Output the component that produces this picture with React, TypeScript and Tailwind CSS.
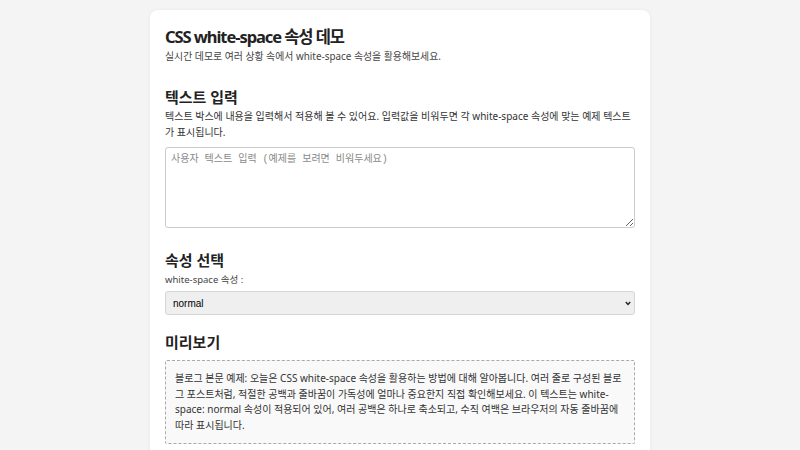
import { useState } from 'react';

const modes = ['normal', 'nowrap', 'pre', 'pre-wrap', 'pre-line', 'break-spaces'] as const;
type Mode = (typeof modes)[number];

const sample =
  '블로그 본문 예제: 오늘은 CSS white-space 속성을 활용하는 방법에 대해 알아봅니다. 여러 줄로 구성된 블로그 포스트처럼, 적절한 공백과 줄바꿈이 가독성에 얼마나 중요한지 직접 확인해보세요. 이 텍스트는 white-space: normal 속성이 적용되어 있어, 여러 공백은 하나로 축소되고, 수직 여백은 브라우저의 자동 줄바꿈에 따라 표시됩니다.';

const wsClass: Record<Mode, string> = {
  normal: 'whitespace-normal',
  nowrap: 'whitespace-nowrap',
  pre: 'whitespace-pre',
  'pre-wrap': 'whitespace-pre-wrap',
  'pre-line': 'whitespace-pre-line',
  'break-spaces': 'whitespace-break-spaces',
};

export default function App() {
  const [text, setText] = useState('');
  const [mode, setMode] = useState<Mode>('normal');

  return (
    <div className="min-h-screen bg-[#f4f4f4] pt-[10px] font-['Noto_Sans','Noto_Sans_CJK_KR',sans-serif] text-[#222]">
      <div className="mx-auto w-[500px] rounded-lg bg-white px-[15px] pt-[15px] pb-6 shadow-[0_0_4px_rgba(0,0,0,0.05)]">
        <h1 className="text-[16.5px] leading-[24px] font-bold tracking-[-0.065em]">CSS white-space 속성 데모</h1>
        <p className="text-[9.9px] leading-[15px] text-[#444]">실시간 데모로 여러 상황 속에서 white-space 속성을 활용해보세요.</p>

        <h2 className="mt-[23px] text-[15px] leading-[20px] font-bold">텍스트 입력</h2>
        <p className="mt-px text-[10px] leading-[16px] text-[#333]">
          텍스트 박스에 내용을 입력해서 적용해 볼 수 있어요. 입력값을 비워두면 각 white-space 속성에 맞는 예제 텍스트가 표시됩니다.
        </p>
        <textarea
          className="mt-[7px] block h-[81px] w-full resize-y rounded-[3px] border border-[#ccc] px-[5px] py-[6px] font-['Liberation_Mono','Noto_Sans_CJK_KR',monospace] text-[10px] leading-[12px] placeholder:text-[#8a8a8a]"
          placeholder="사용자 텍스트 입력 (예제를 보려면 비워두세요)"
          value={text}
          onChange={(e) => setText(e.target.value)}
        />

        <h2 className="mt-[22px] text-[15px] leading-[20px] font-bold">속성 선택</h2>
        <label className="mt-[2px] block text-[9.5px] leading-[15px] text-[#444]">white-space 속성 :</label>
        <div className="relative mt-1">
          <select
            className="block h-6 w-full appearance-none rounded-[3px] border border-[#d6d6d6] bg-[#efefef] px-[7px] font-['Liberation_Sans',sans-serif] text-[10px] text-black"
            value={mode}
            onChange={(e) => setMode(e.target.value as Mode)}
          >
            {modes.map((m) => (
              <option key={m} value={m}>{m}</option>
            ))}
          </select>
          <svg className="pointer-events-none absolute top-[10px] right-[4px] h-[5px] w-[6px]" viewBox="0 0 6 5">
            <path d="M0.8 1 L3 3.4 L5.2 1" fill="none" stroke="#222" strokeWidth="1.4" />
          </svg>
        </div>

        <h2 className="mt-[17px] text-[15px] leading-[20px] font-bold">미리보기</h2>
        <div className={`mt-2 rounded-[2px] border border-dashed border-[#aaa] bg-[#f9f9f9] px-[9px] pt-[10px] pb-[10px] text-[10px] leading-[15.5px] text-[#333] ${wsClass[mode]}`}>
          {text || sample}
        </div>
      </div>
    </div>
  );
}
